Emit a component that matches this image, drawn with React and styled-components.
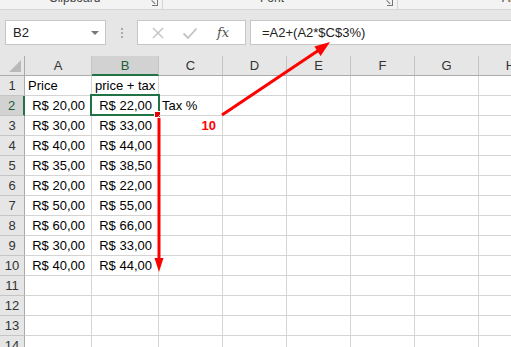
import React from 'react';
import styled, { createGlobalStyle } from 'styled-components';

const GlobalStyle = createGlobalStyle`
  html, body {
    margin: 0;
    padding: 0;
    overflow: hidden;
    background: #ffffff;
  }
  body {
    font-family: "Liberation Sans", Arial, sans-serif;
  }
`;

const Screen = styled.div`
  position: relative;
  width: 511px;
  height: 347px;
  overflow: hidden;
  background: #ffffff;
`;

const Ribbon = styled.div`
  display: flex;
  height: 9px;
  background: #f3f3f3;
  border-bottom: 1px solid #d5d5d5;
  overflow: hidden;
`;

const RibbonGroup = styled.div`
  display: flex;
  align-items: flex-start;
  width: ${(p) => p.width || 'auto'};
  flex: ${(p) => (p.width ? 'none' : '1')};
  padding-left: ${(p) => p.pad}px;
  box-sizing: border-box;
  border-right: ${(p) => (p.last ? 'none' : '1px solid #d5d5d5')};
`;

const GroupLabel = styled.span`
  font-size: 12px;
  color: #444;
  margin-top: -9px;
  line-height: 14px;
`;

const Launcher = styled.span`
  margin-left: auto;
  margin-right: 4px;
  width: 5px;
  height: 5px;
  border-right: 1px solid #777;
  border-bottom: 1px solid #777;
  position: relative;
  &::after {
    content: '';
    position: absolute;
    left: 0;
    top: 0;
    width: 5px;
    height: 1px;
    background: #777;
    transform: rotate(45deg);
    transform-origin: 0 0;
  }
`;

const FormulaBar = styled.div`
  display: flex;
  height: 25px;
  padding: 10px 0 11px 5px;
  background: #e6e6e6;
`;

const NameBox = styled.div`
  display: flex;
  align-items: center;
  width: 101px;
  box-sizing: border-box;
  padding: 0 6px 0 7px;
  background: #fff;
  border: 1px solid #c6c6c6;
  font-size: 13px;
  color: #222;
`;

const Caret = styled.span`
  margin-left: auto;
  width: 0;
  height: 0;
  border-left: 4px solid transparent;
  border-right: 4px solid transparent;
  border-top: 4px solid #777;
`;

const Grip = styled.div`
  width: 31px;
  display: flex;
  flex-direction: column;
  align-items: center;
  justify-content: center;
  gap: 2px;
  span {
    width: 2px;
    height: 2px;
    background: #aaa;
  }
`;

const FxBox = styled.div`
  display: flex;
  align-items: center;
  width: 109px;
  box-sizing: border-box;
  background: #fff;
  border: 1px solid #c6c6c6;
  padding: 0 0 0 13px;
  gap: 17px;
  margin-right: 4px;
`;

const FxLabel = styled.span`
  font-family: "DejaVu Serif", "Liberation Serif", serif;
  font-style: italic;
  font-size: 13px;
  color: #555;
  margin-left: 2px;
`;

const FormulaInput = styled.div`
  flex: 1;
  display: flex;
  align-items: center;
  background: #fff;
  border: 1px solid #c6c6c6;
  border-right: none;
  padding-left: 11px;
  font-size: 13px;
  color: #222;
`;

const Grid = styled.div`
  display: grid;
  grid-template-columns: 25px 67px 67px 64px 64px 64px 64px 64px 64px;
  grid-auto-rows: 20px;
  width: 543px;
`;

const Corner = styled.div`
  background: #e6e6e6;
  border-right: 1px solid #ababab;
  border-bottom: 1px solid #ababab;
  box-sizing: border-box;
  display: flex;
  align-items: flex-end;
  justify-content: flex-end;
  padding: 0 3px 3px 0;
  &::after {
    content: '';
    width: 0;
    height: 0;
    border-left: 12px solid transparent;
    border-bottom: 12px solid #b9b9b9;
  }
`;

const ColHead = styled.div`
  box-sizing: border-box;
  display: flex;
  align-items: center;
  justify-content: center;
  font-size: 13px;
  background: ${(p) => (p.active ? '#d2d2d2' : '#e6e6e6')};
  color: ${(p) => (p.active ? '#1e5e3a' : '#333')};
  border-right: 1px solid #c4c4c4;
  border-bottom: ${(p) => (p.active ? '2px solid #217346' : '1px solid #ababab')};
`;

const RowHead = styled.div`
  box-sizing: border-box;
  display: flex;
  align-items: center;
  justify-content: center;
  font-size: 13px;
  background: ${(p) => (p.active ? '#d2d2d2' : '#e6e6e6')};
  color: ${(p) => (p.active ? '#1e5e3a' : '#333')};
  border-bottom: 1px solid #c4c4c4;
  border-right: ${(p) => (p.active ? '2px solid #217346' : '1px solid #ababab')};
`;

const Cell = styled.div`
  position: relative;
  box-sizing: border-box;
  display: flex;
  align-items: center;
  justify-content: ${(p) => (p.right ? 'flex-end' : 'flex-start')};
  padding: ${(p) => (p.right ? '0 6px 0 0' : '0 0 0 3px')};
  border-right: 1px solid #d4d4d4;
  border-bottom: 1px solid #d4d4d4;
  font-size: 13px;
  white-space: nowrap;
  overflow: visible;
  color: ${(p) => (p.red ? '#ff0000' : '#000')};
  font-weight: ${(p) => (p.red ? 'bold' : 'normal')};
  ${(p) =>
    p.selected &&
    `
    &::before {
      content: '';
      position: absolute;
      left: -2px;
      top: -2px;
      right: -2px;
      bottom: -1px;
      border: 2px solid #217346;
      pointer-events: none;
    }
    &::after {
      content: '';
      position: absolute;
      right: -3px;
      bottom: -3px;
      width: 5px;
      height: 5px;
      background: #e00000;
      border: 1px solid #fff;
    }
  `}
`;

const Overlay = styled.svg`
  position: absolute;
  left: 0;
  top: 0;
  pointer-events: none;
`;

const cols = ['A', 'B', 'C', 'D', 'E', 'F', 'G', 'H'];
const prices = [20, 30, 40, 35, 20, 50, 60, 30, 40];
const money = (v) => `R$ ${v.toFixed(2).replace('.', ',')}`;

const cellsFor = (row) => {
  const c = Array(8).fill(null).map(() => ({ text: '' }));
  if (row === 1) {
    c[0] = { text: 'Price' };
    c[1] = { text: 'price + tax' };
  } else if (row >= 2 && row <= 10) {
    const p = prices[row - 2];
    c[0] = { text: money(p), right: true };
    c[1] = { text: money(p * 1.1), right: true, selected: row === 2 };
  }
  if (row === 2) c[2] = { text: 'Tax %' };
  if (row === 3) c[2] = { text: '10', right: true, red: true };
  return c;
};

const rows = Array.from({ length: 14 }, (_, i) => i + 1);

export default function App() {
  return (
    <>
      <GlobalStyle />
      <Screen>
        <Ribbon>
          <RibbonGroup width="163px" pad={49}>
            <GroupLabel>Clipboard</GroupLabel>
            <Launcher />
          </RibbonGroup>
          <RibbonGroup width="235px" pad={97}>
            <GroupLabel>Font</GroupLabel>
            <Launcher />
          </RibbonGroup>
          <RibbonGroup pad={104} last>
            <GroupLabel>Alignment</GroupLabel>
          </RibbonGroup>
        </Ribbon>

        <FormulaBar>
          <NameBox>
            B2
            <Caret />
          </NameBox>
          <Grip>
            <span />
            <span />
            <span />
          </Grip>
          <FxBox>
            <svg width="14" height="14" viewBox="0 0 14 14">
              <path d="M2 2 L12 12 M12 2 L2 12" stroke="#c2c2c2" strokeWidth="1.4" fill="none" />
            </svg>
            <svg width="16" height="14" viewBox="0 0 16 14">
              <path d="M1.5 7.5 L6 12 L14.5 2.5" stroke="#c2c2c2" strokeWidth="1.8" fill="none" />
            </svg>
            <FxLabel>fx</FxLabel>
          </FxBox>
          <FormulaInput>=A2+(A2*$C$3%)</FormulaInput>
        </FormulaBar>

        <Grid>
          <Corner />
          {cols.map((c) => (
            <ColHead key={c} active={c === 'B'}>
              {c}
            </ColHead>
          ))}
          {rows.map((r) => (
            <React.Fragment key={r}>
              <RowHead active={r === 2}>{r}</RowHead>
              {cellsFor(r).map((cell, i) => (
                <Cell key={i} right={cell.right} red={cell.red} selected={cell.selected}>
                  {cell.text}
                </Cell>
              ))}
            </React.Fragment>
          ))}
        </Grid>

        <Overlay width="511" height="347" viewBox="0 0 511 347">
          <line x1="159" y1="118" x2="159" y2="260" stroke="#ff0000" strokeWidth="3" />
          <polygon points="154.5,258 163.5,258 159,272" fill="#ff0000" />
          <line x1="222" y1="115" x2="319" y2="50" stroke="#ff0000" strokeWidth="3" />
          <polygon points="330,42 320.6,56 314.4,46.6" fill="#ff0000" />
        </Overlay>
      </Screen>
    </>
  );
}
